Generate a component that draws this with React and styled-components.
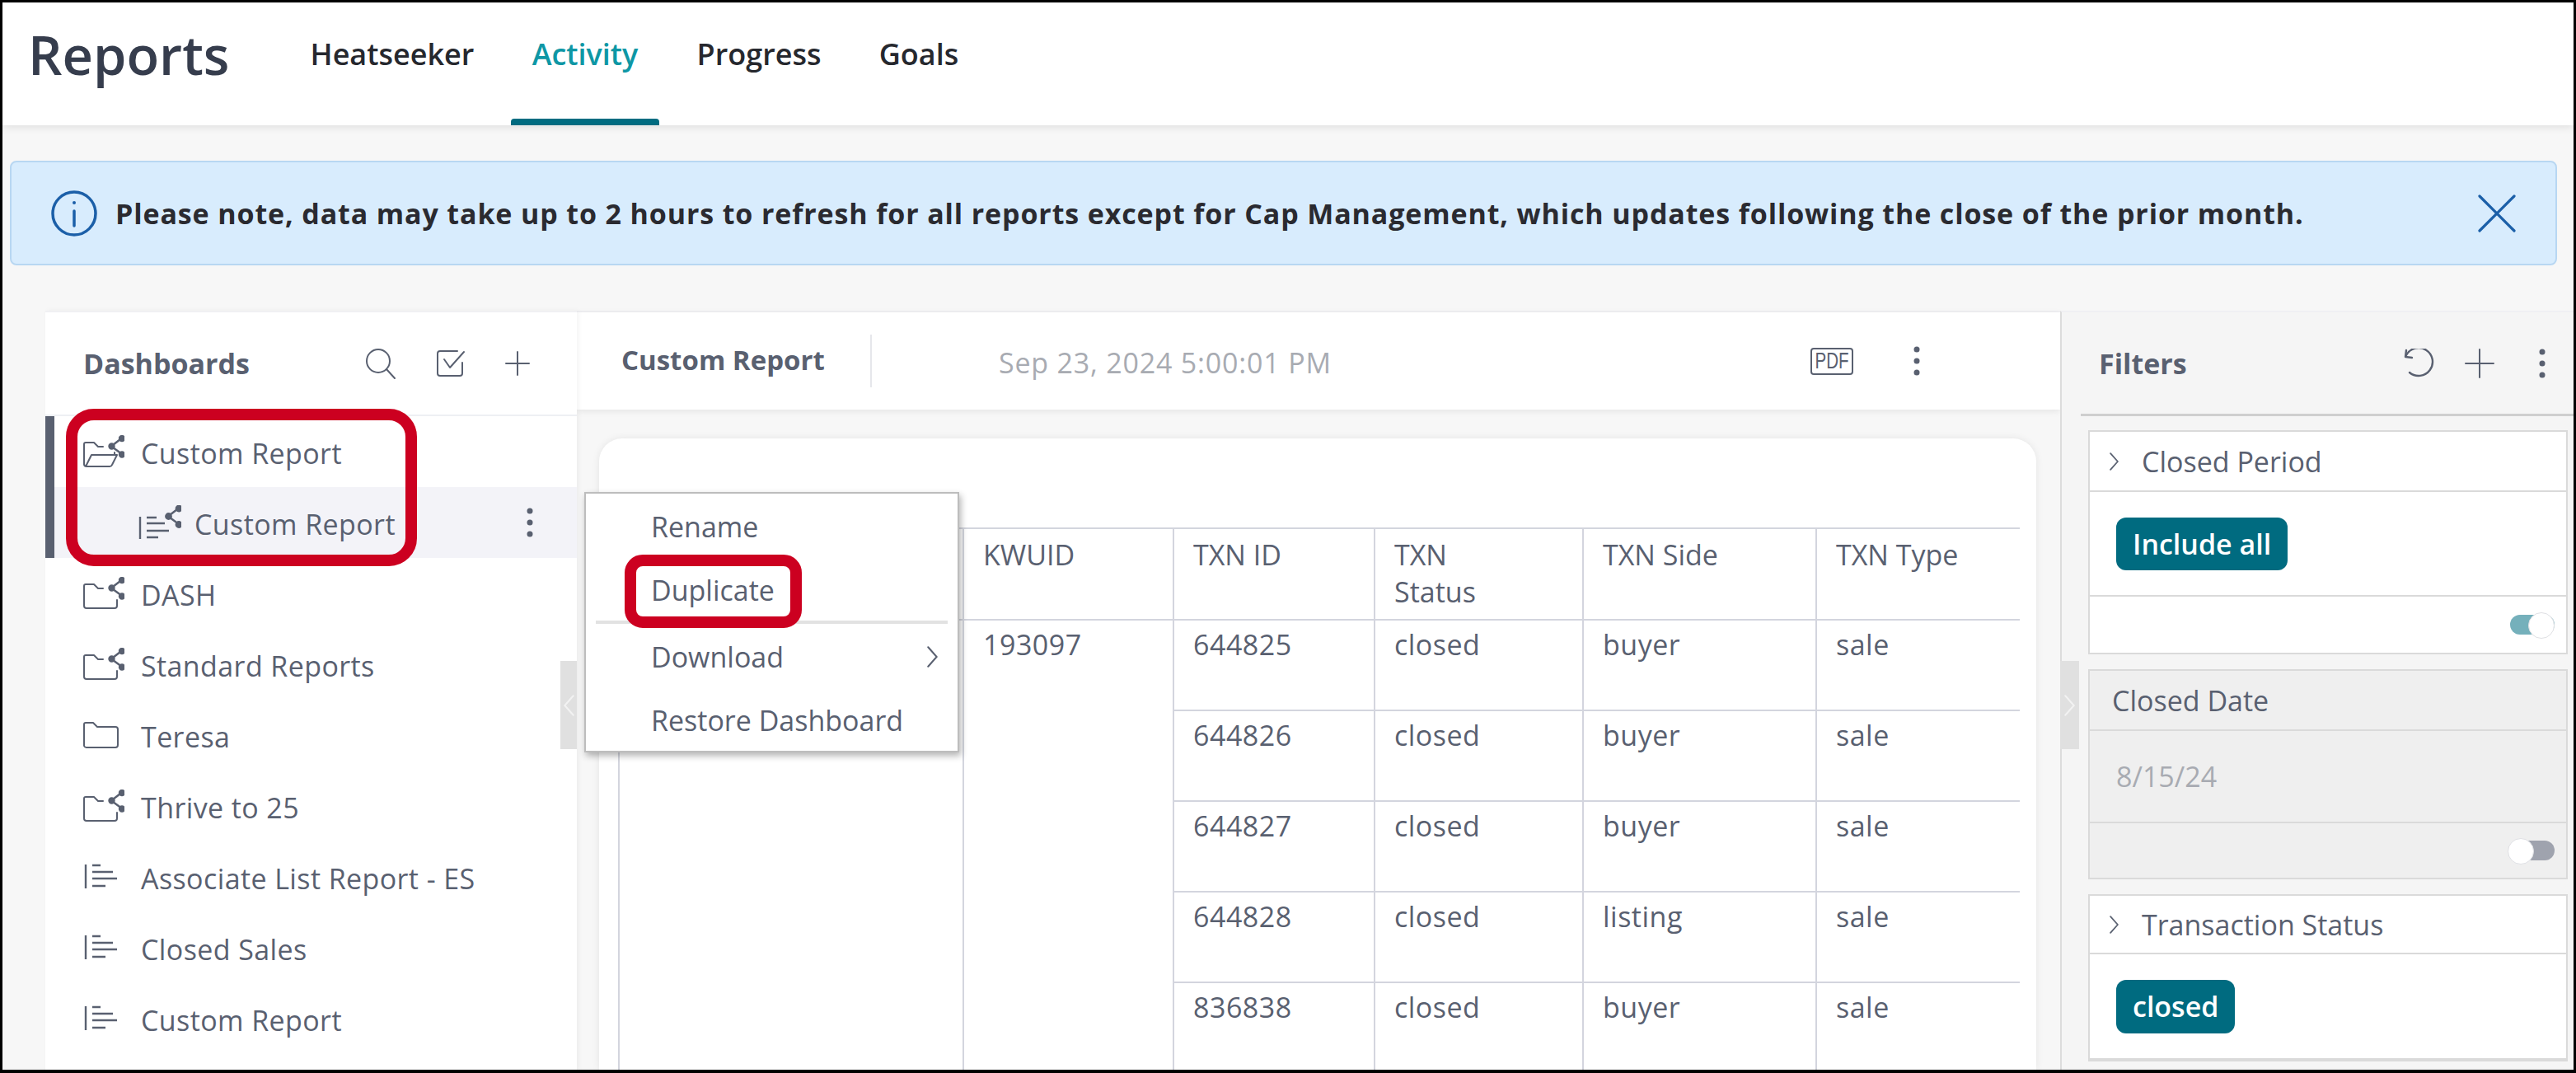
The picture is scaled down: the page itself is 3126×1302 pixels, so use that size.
import React from "react";
import styled, { createGlobalStyle } from "styled-components";

const slate = "#596070";
const teal = "#006b80";
const red = "#cc0020";
const fontStack = `"Open Sans", "Noto Sans", sans-serif`;

const GlobalStyle = createGlobalStyle`
  html, body { margin: 0; padding: 0; background: #fff; }
  * { box-sizing: border-box; }
  body { font-family: ${fontStack}; color: ${slate}; }
`;

const Frame = styled.div`
  position: relative;
  width: 3126px;
  height: 1302px;
  border: solid #000;
  border-width: 3px 3px 4px 3px;
  display: flex;
  flex-direction: column;
  overflow: hidden;
  background: #f7f7f7;
`;

const TopBar = styled.header`
  height: 149px;
  flex: none;
  display: flex;
  background: #fff;
  padding-left: 31px;
  box-shadow: 0 2px 10px rgba(0, 0, 0, 0.1);
  position: relative;
  z-index: 2;
`;

const PageTitle = styled.h1`
  margin: 0;
  width: 298px;
  font-size: 65px;
  font-weight: 600;
  line-height: 126px;
  height: 126px;
  color: #363d4d;
`;

const Tabs = styled.nav`
  display: flex;
  height: 100%;
`;

const Tab = styled.div`
  position: relative;
  width: ${({ $w }) => $w}px;
  padding-top: 41px;
  text-align: center;
  font-size: 36px;
  line-height: 44px;
  font-weight: 600;
  color: ${({ $active }) => ($active ? "#0e97a5" : "#26282e")};
  ${({ $active }) =>
    $active &&
    `&::after {
      content: "";
      position: absolute;
      left: 0;
      right: 0;
      bottom: 0;
      height: 8px;
      background: ${teal};
      border-radius: 4px 4px 0 0;
    }`}
`;

const Notice = styled.div`
  flex: none;
  height: 127px;
  margin: 43px 20px 0 9px;
  padding: 0 48px 0 48px;
  display: flex;
  align-items: center;
  background: #d8ecfd;
  border: 2px solid #b8d7f2;
  border-radius: 8px;
  color: #2a2a30;
  font-size: 34px;
  font-weight: 700;
`;

const NoticeText = styled.span`
  flex: 1;
  margin-left: 22px;
  white-space: nowrap;
  letter-spacing: 0.87px;
`;

const Workspace = styled.div`
  position: relative;
  flex: 1;
  min-height: 0;
  margin: 55px 0 0 52px;
  display: flex;
`;

const Sidebar = styled.aside`
  width: 645px;
  flex: none;
  background: #fff;
  border-top: 2px solid #f0f0f3;
  box-shadow: 2px 0 6px rgba(0, 0, 0, 0.05);
  position: relative;
  z-index: 1;
`;

const PanelHead = styled.div`
  height: 126px;
  display: flex;
  align-items: center;
  padding: 0 ${({ $right }) => $right}px 0 46px;
  border-bottom: 2px solid #eef0f3;
`;

const PanelTitle = styled.div`
  flex: 1;
  font-size: 34px;
  font-weight: 700;
  color: ${slate};
`;

const IconGroup = styled.div`
  display: flex;
  align-items: center;
  gap: ${({ $gap }) => $gap}px;
`;

const ActiveGroup = styled.div`
  border-left: 11px solid ${slate};
`;

const TreeRow = styled.div`
  height: ${({ $h }) => $h || 86}px;
  display: flex;
  align-items: center;
  gap: ${({ $gap }) => $gap || 20}px;
  padding-left: ${({ $pad }) => $pad}px;
  padding-right: 53px;
  font-size: 34px;
  background: ${({ $selected }) => ($selected ? "#f3f3f8" : "transparent")};
  white-space: nowrap;
`;

const RowLabel = styled.span`
  flex: 1;
  padding-top: 3px;
  letter-spacing: 0.4px;
`;

const IconSlot = styled.span`
  width: 50px;
  flex: none;
  display: flex;
`;

const Handle = styled.div`
  position: absolute;
  top: 425px;
  left: ${({ $left }) => $left}px;
  width: ${({ $w }) => $w}px;
  height: 107px;
  background: #e0e0e0;
  display: flex;
  align-items: center;
  justify-content: center;
  z-index: 1;
`;

const Center = styled.main`
  flex: 1;
  min-width: 0;
  display: flex;
  flex-direction: column;
  border-top: 2px solid #f0f0f3;
`;

const CenterHead = styled.div`
  height: 118px;
  flex: none;
  display: flex;
  align-items: center;
  padding-left: 54px;
  background: #fff;
  box-shadow: 0 2px 8px rgba(0, 0, 0, 0.08);
`;

const ReportName = styled.div`
  width: 304px;
  height: 64px;
  line-height: 62px;
  border-right: 2px solid #e6e7eb;
  font-size: 33px;
  font-weight: 700;
  white-space: nowrap;
`;

const Stamp = styled.div`
  flex: 1;
  margin-left: 154px;
  padding-top: 4px;
  font-size: 34px;
  letter-spacing: 0.8px;
  color: #a8abb2;
`;

const PdfBadge = styled.div`
  width: 52px;
  height: 33px;
  border: 2px solid ${slate};
  border-radius: 4px;
  display: flex;
  align-items: center;
  justify-content: center;
  color: ${slate};
`;

const PdfLabel = styled.span`
  display: inline-block;
  font-family: "Liberation Sans", sans-serif;
  font-size: 27px;
  line-height: 27px;
  transform: scaleX(0.76);
`;

const CenterBody = styled.div`
  flex: 1;
  min-height: 0;
  padding: 35px 29px 0 27px;
`;

const Card = styled.div`
  height: 100%;
  background: #fff;
  border-radius: 28px 28px 0 0;
  box-shadow: 0 0 10px rgba(0, 0, 0, 0.08);
  padding: 108px 21px 0 23px;
  overflow: hidden;
`;

const Table = styled.table`
  width: 1700px;
  table-layout: fixed;
  border-collapse: collapse;
  font-size: 34px;
  line-height: 45px;
`;

const Head = styled.th`
  height: 111px;
  padding: 9px 23px 0;
  border: 2px solid #d3d5de;
  border-right: ${({ $last }) => ($last ? "none" : "2px solid #d3d5de")};
  vertical-align: top;
  text-align: left;
  font-weight: 400;
`;

const Cell = styled.td`
  height: 110px;
  padding: 7px 23px 0;
  border: 2px solid #d3d5de;
  border-right: ${({ $last }) => ($last ? "none" : "2px solid #d3d5de")};
  vertical-align: top;
  letter-spacing: 0.5px;
`;

const Filters = styled.aside`
  width: 623px;
  flex: none;
  background: #f5f5f5;
  border-left: 2px solid #dcdcdc;
  border-top: 2px solid #f0f0f3;
`;

const FiltersHead = styled.div`
  height: 126px;
  margin-left: 23px;
  display: flex;
  align-items: center;
  padding: 0 34px 0 22px;
  border-bottom: 3px solid #cfcfcf;
`;

const FilterStack = styled.div`
  padding: 17px 7px 0 32px;
  display: flex;
  flex-direction: column;
  gap: 18px;
`;

const FilterCard = styled.section`
  background: ${({ $muted }) => ($muted ? "#efefef" : "#fff")};
  border: 2px solid #dadada;
`;

const FilterTitle = styled.div`
  height: ${({ $h }) => $h}px;
  display: flex;
  align-items: center;
  gap: 28px;
  padding-left: ${({ $pad }) => $pad || 24}px;
  font-size: 34px;
  border-bottom: 2px solid #dadada;
`;

const FilterBody = styled.div`
  height: ${({ $h }) => $h}px;
  display: flex;
  align-items: center;
  padding-left: 32px;
  border-bottom: ${({ $last }) => ($last ? "none" : "2px solid #dadada")};
`;

const FilterFoot = styled.div`
  height: ${({ $h }) => $h}px;
  display: flex;
  align-items: center;
  justify-content: flex-end;
  padding-right: 14px;
`;

const Chip = styled.span`
  height: ${({ $h }) => $h}px;
  padding: 0 20px;
  display: inline-flex;
  align-items: center;
  background: ${teal};
  border-radius: 12px;
  color: #fff;
  font-size: 34px;
  font-weight: 600;
`;

const DateText = styled.span`
  color: #a8abb2;
  font-size: 34px;
`;

const Toggle = styled.span`
  position: relative;
  width: 54px;
  height: 24px;
  border-radius: 12px;
  background: ${({ $on }) => ($on ? "#75b0bb" : "#9fa3ae")};
  &::after {
    content: "";
    position: absolute;
    top: -3px;
    ${({ $on }) => ($on ? "right: 0;" : "left: -3px;")}
    width: 30px;
    height: 30px;
    border-radius: 50%;
    background: #fff;
    border: 1px solid #dfe0e4;
  }
`;

const Menu = styled.div`
  position: absolute;
  left: 654px;
  top: 220px;
  width: 455px;
  height: 316px;
  padding: 0 12px;
  background: #fff;
  border: 2px solid #bdbdbd;
  box-shadow: 2px 4px 8px rgba(0, 0, 0, 0.3);
  z-index: 3;
  font-size: 34px;
`;

const MenuItem = styled.div`
  height: 77px;
  display: flex;
  align-items: center;
  justify-content: space-between;
  padding: 2px 12px 0 67px;
`;

const MenuRule = styled.div`
  height: 4px;
  background: #e2e2e2;
`;

const Callout = styled.div`
  position: absolute;
  left: ${({ $x }) => $x}px;
  top: ${({ $y }) => $y}px;
  width: ${({ $w }) => $w}px;
  height: ${({ $h }) => $h}px;
  border: 14px solid ${red};
  border-radius: ${({ $r }) => $r}px;
  z-index: 4;
`;

const Line = ({ w = 38, h = 38, children, sw = 2, color = slate }) => (
  <svg width={w} height={h} viewBox={`0 0 ${w} ${h}`} fill="none" stroke={color} strokeWidth={sw} strokeLinecap="round" strokeLinejoin="round">
    {children}
  </svg>
);

const Share = ({ x = 0, y = 0 }) => (
  <g transform={`translate(${x} ${y})`}>
    <path d="M15 2.5 L2 12.5 L15 22" strokeWidth="2.5" />
    <circle cx="15" cy="3" r="3.2" fill={slate} />
    <circle cx="2.5" cy="12.5" r="3.2" fill={slate} />
    <circle cx="15" cy="22.5" r="3.2" fill={slate} />
  </g>
);

const SharedFolder = () => (
  <Line w={50} h={40}>
    <path d="M41 28 V35 a3 3 0 0 1-3 3 H4 a3 3 0 0 1-3-3 V11 a2 2 0 0 1 2-2 H13 l5 5 H24" />
    <Share x={32} y={1} />
  </Line>
);

const OpenSharedFolder = () => (
  <Line w={50} h={40}>
    <path d="M1 35 V11 a2 2 0 0 1 2-2 H13 l5 5 H24" />
    <path d="M3 38 L10 24 H41 L35 36 a3 3 0 0 1-3 2 H4 a3 3 0 0 1-3-3" />
    <path d="M38 24 V21" />
    <Share x={32} y={1} />
  </Line>
);

const PlainFolder = () => (
  <Line w={44} h={34}>
    <path d="M1 30 V4 a2 2 0 0 1 2-2 H12 l5 5 H39 a3 3 0 0 1 3 3 V29 a3 3 0 0 1-3 3 H4 a3 3 0 0 1-3-2 Z" />
  </Line>
);

const ListIcon = () => (
  <Line w={42} h={32} sw={2.4}>
    <path d="M3 1 V30" strokeLinecap="butt" />
    <path d="M11 2 H21 M11 10 H36 M11 18 H41 M11 27 H27" strokeLinecap="butt" />
  </Line>
);

const SharedList = () => (
  <Line w={52} h={42} sw={2.4}>
    <path d="M2 14 V41" strokeLinecap="butt" />
    <path d="M10 15 H22 M10 22 H32 M10 31 H37 M10 39 H24" strokeLinecap="butt" />
    <Share x={34} y={1} />
  </Line>
);

const rowIcon = { open: <OpenSharedFolder />, shared: <SharedFolder />, plain: <PlainFolder />, list: <ListIcon /> };

const SearchIcon = () => (
  <Line w={38} h={38}>
    <circle cx="16" cy="16" r="14" />
    <path d="M26 26 L36 37" />
  </Line>
);

const CheckBoxIcon = () => (
  <Line w={36} h={34}>
    <path d="M26 2 H5 a3 3 0 0 0-3 3 V29 a3 3 0 0 0 3 3 H29 a3 3 0 0 0 3-3 V16" />
    <path d="M10 12 L17 22 L34 3" />
  </Line>
);

const PlusIcon = ({ size = 30 }) => (
  <Line w={size} h={size}>
    <path d={`M${size / 2} 1 V${size - 1} M1 ${size / 2} H${size - 1}`} />
  </Line>
);

const UndoIcon = () => (
  <Line w={38} h={36} sw={2.4}>
    <path d="M3 8 A17 17 0 1 1 7 29" />
    <path d="M3 2 L2 10 L10 11" />
  </Line>
);

const Kebab = () => (
  <svg width="8" height="36" viewBox="0 0 8 36" fill={slate}>
    <circle cx="4" cy="4" r="3.5" />
    <circle cx="4" cy="18" r="3.5" />
    <circle cx="4" cy="32" r="3.5" />
  </svg>
);

const KebabSlot = styled.span`
  width: 8px;
  margin-left: 18px;
  display: flex;
`;

const Chevron = ({ h = 22, color = slate, dir = "right" }) => (
  <svg width={h / 2} height={h} viewBox="0 0 10 20" fill="none" stroke={color} strokeWidth="1.6" strokeLinecap="round">
    <path d={dir === "right" ? "M1 1 L9 10 L1 19" : "M9 1 L1 10 L9 19"} />
  </svg>
);

const InfoIcon = () => (
  <svg width="56" height="56" viewBox="0 0 56 56" fill="none" stroke="#1b5fa8" strokeWidth="3.5" strokeLinecap="round">
    <circle cx="28" cy="28" r="26" />
    <path d="M28 25 V43" />
    <circle cx="28" cy="15" r="2" fill="#1b5fa8" stroke="none" />
  </svg>
);

const CloseIcon = () => (
  <svg width="46" height="46" viewBox="0 0 46 46" fill="none" stroke="#1b5fa8" strokeWidth="3.2" strokeLinecap="round">
    <path d="M2 2 L44 44 M44 2 L2 44" />
  </svg>
);

const topLevel = [
  ["shared", "DASH"],
  ["shared", "Standard Reports"],
  ["plain", "Teresa"],
  ["shared", "Thrive to 25"],
  ["list", "Associate List Report - ES"],
  ["list", "Closed Sales"],
  ["list", "Custom Report"],
];

const columns = [["KWUID"], ["TXN ID"], ["TXN", "Status"], ["TXN Side"], ["TXN Type"]];

const rows = [
  ["644825", "closed", "buyer", "sale"],
  ["644826", "closed", "buyer", "sale"],
  ["644827", "closed", "buyer", "sale"],
  ["644828", "closed", "listing", "sale"],
  ["836838", "closed", "buyer", "sale"],
];

export default function App() {
  return (
    <Frame>
      <GlobalStyle />
      <TopBar>
        <PageTitle>Reports</PageTitle>
        <Tabs>
          <Tab $w={288}>Heatseeker</Tab>
          <Tab $w={180} $active>Activity</Tab>
          <Tab $w={242}>Progress</Tab>
          <Tab $w={146}>Goals</Tab>
        </Tabs>
      </TopBar>

      <Notice>
        <InfoIcon />
        <NoticeText>Please note, data may take up to 2 hours to refresh for all reports except for Cap Management, which updates following the close of the prior month.</NoticeText>
        <CloseIcon />
      </Notice>

      <Workspace>
        <Sidebar>
          <PanelHead $right={57}>
            <PanelTitle>Dashboards</PanelTitle>
            <IconGroup $gap={48}>
              <SearchIcon />
              <CheckBoxIcon />
              <PlusIcon />
            </IconGroup>
          </PanelHead>
          <ActiveGroup>
            <TreeRow $pad={35}>
              <IconSlot>{rowIcon.open}</IconSlot>
              <RowLabel>Custom Report</RowLabel>
            </TreeRow>
            <TreeRow $pad={102} $gap={16} $selected>
              <SharedList />
              <RowLabel>Custom Report</RowLabel>
              <Kebab />
            </TreeRow>
          </ActiveGroup>
          {topLevel.map(([icon, label], i) => (
            <TreeRow key={i} $pad={46}>
              <IconSlot>{rowIcon[icon]}</IconSlot>
              <RowLabel>{label}</RowLabel>
            </TreeRow>
          ))}
        </Sidebar>

        <Center>
          <CenterHead>
            <ReportName>Custom Report</ReportName>
            <Stamp>Sep 23, 2024 5:00:01 PM</Stamp>
            <IconGroup $gap={73} style={{ marginRight: 170 }}>
              <PdfBadge>
                <PdfLabel>PDF</PdfLabel>
              </PdfBadge>
              <Kebab />
            </IconGroup>
          </CenterHead>
          <CenterBody>
            <Card>
              <Table>
                <colgroup>
                  <col width="418" />
                  <col width="255" />
                  <col width="244" />
                  <col width="253" />
                  <col width="283" />
                  <col width="247" />
                </colgroup>
                <thead>
                  <tr>
                    <Head />
                    {columns.map((lines, i) => (
                      <Head key={lines[0] + i} $last={i === columns.length - 1}>
                        {lines.map((l, k) => (
                          <div key={k}>{l}</div>
                        ))}
                      </Head>
                    ))}
                  </tr>
                </thead>
                <tbody>
                  {rows.map((r, i) => (
                    <tr key={r[0]}>
                      {i === 0 && <Cell rowSpan={rows.length} />}
                      {i === 0 && <Cell rowSpan={rows.length}>193097</Cell>}
                      {r.map((v, j) => (
                        <Cell key={j} $last={j === r.length - 1}>{v}</Cell>
                      ))}
                    </tr>
                  ))}
                </tbody>
              </Table>
            </Card>
          </CenterBody>
        </Center>

        <Filters>
          <FiltersHead>
            <PanelTitle>Filters</PanelTitle>
            <IconGroup $gap={36}>
              <UndoIcon />
              <PlusIcon size={36} />
              <KebabSlot>
                <Kebab />
              </KebabSlot>
            </IconGroup>
          </FiltersHead>
          <FilterStack>
            <FilterCard>
              <FilterTitle $h={73}>
                <Chevron />
                Closed Period
              </FilterTitle>
              <FilterBody $h={127}>
                <Chip $h={64}>Include all</Chip>
              </FilterBody>
              <FilterFoot $h={68}>
                <Toggle $on />
              </FilterFoot>
            </FilterCard>
            <FilterCard $muted>
              <FilterTitle $h={73} $pad={27}>Closed Date</FilterTitle>
              <FilterBody $h={112}>
                <DateText>8/15/24</DateText>
              </FilterBody>
              <FilterFoot $h={66}>
                <Toggle />
              </FilterFoot>
            </FilterCard>
            <FilterCard>
              <FilterTitle $h={71}>
                <Chevron />
                Transaction Status
              </FilterTitle>
              <FilterBody $h={128}>
                <Chip $h={65}>closed</Chip>
              </FilterBody>
            </FilterCard>
          </FilterStack>
        </Filters>

        <Handle $left={625} $w={20}>
          <Chevron color="#f2f2f2" dir="left" h={26} />
        </Handle>
        <Handle $left={2445} $w={23}>
          <Chevron color="#f2f2f2" h={26} />
        </Handle>

        <Menu>
          <MenuItem>Rename</MenuItem>
          <MenuItem>Duplicate</MenuItem>
          <MenuRule />
          <MenuItem>
            Download
            <Chevron h={26} />
          </MenuItem>
          <MenuItem>Restore Dashboard</MenuItem>
        </Menu>

        <Callout $x={25} $y={119} $w={426} $h={191} $r={34} />
        <Callout $x={703} $y={296} $w={215} $h={89} $r={22} />
      </Workspace>
    </Frame>
  );
}
